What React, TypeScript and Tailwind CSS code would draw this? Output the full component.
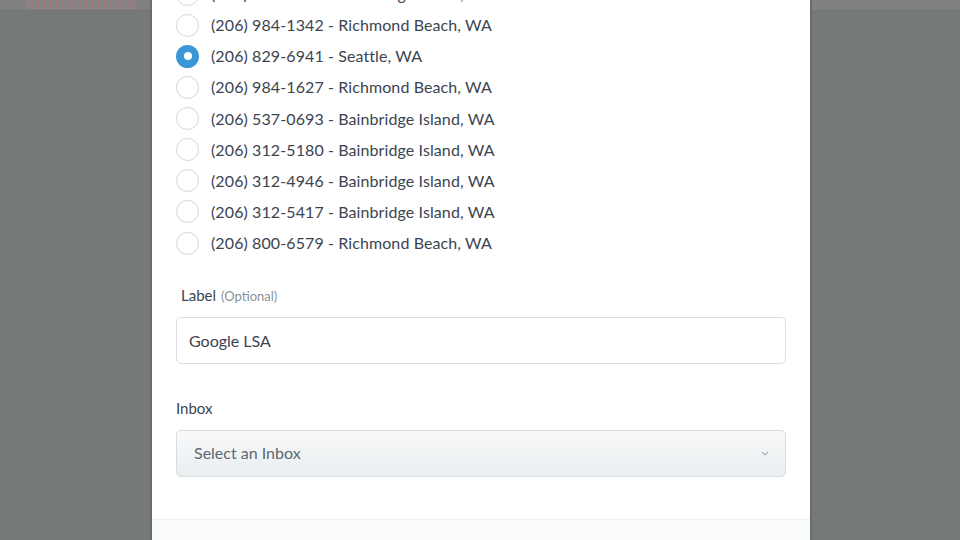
import React from "react";

const rows = [
  { n: "(206) 842-9037 - Bainbridge Island, WA", sel: false },
  { n: "(206) 984-1342 - Richmond Beach, WA", sel: false },
  { n: "(206) 829-6941 - Seattle, WA", sel: true },
  { n: "(206) 984-1627 - Richmond Beach, WA", sel: false },
  { n: "(206) 537-0693 - Bainbridge Island, WA", sel: false },
  { n: "(206) 312-5180 - Bainbridge Island, WA", sel: false },
  { n: "(206) 312-4946 - Bainbridge Island, WA", sel: false },
  { n: "(206) 312-5417 - Bainbridge Island, WA", sel: false },
  { n: "(206) 800-6579 - Richmond Beach, WA", sel: false },
];

export default function App() {
  return (
    <div
      className="relative w-[960px] h-[540px] overflow-hidden bg-[#767979] flex flex-col"
      style={{ fontFamily: "Lato, 'Open Sans', sans-serif" }}
    >
      <div className="h-[11px] bg-[#7f8080] border-b border-[#727474] flex items-start pl-[26px]">
        <div className="w-[110px] h-[9px] bg-[repeating-linear-gradient(90deg,#9a7a7c_0px,#9a7a7c_1px,#858585_1px,#858585_3px)]" />
      </div>
      <div className="flex-1" />

      <div className="absolute left-[150px] top-0 bottom-0 w-[662px] bg-white border-x-2 border-[#6a6d6d] flex flex-col overflow-hidden">
        <div className="flex flex-col mt-[-21.5px] pl-[24px] pr-[24px]">
          {rows.map((r, i) => (
            <div key={i} className="h-[31.125px] flex items-center gap-[12px]">
              {r.sel ? (
                <div className="w-[23px] h-[23px] rounded-full bg-[#3a97d6] flex items-center justify-center">
                  <div className="w-[8px] h-[8px] rounded-full bg-white" />
                </div>
              ) : (
                <div className="w-[23px] h-[23px] rounded-full border border-[#d3d6d8] bg-white" />
              )}
              <span className="text-[16px] text-[#3c4450] tracking-[0.1px]">{r.n}</span>
            </div>
          ))}

          <div className="mt-[25px] flex items-baseline gap-[5px] pl-[5px]">
            <span className="text-[15px] text-[#3c4450]">Label</span>
            <span className="text-[13px] text-[#8a939b]">(Optional)</span>
          </div>
          <div className="mt-[11px] h-[47px] rounded-[5px] border border-[#dcdfe2] flex items-center px-[12px]">
            <span className="text-[16px] text-[#3c4450]">Google LSA</span>
          </div>

          <div className="mt-[33px] text-[15px] text-[#3c4450]">Inbox</div>
          <div className="mt-[10px] h-[47px] rounded-[5px] border border-[#d8dcdf] bg-gradient-to-b from-[#f8f9fa] to-[#eaeef0] flex items-center justify-between pl-[17px] pr-[16px]">
            <span className="text-[16px] text-[#5d6771]">Select an Inbox</span>
            <svg width="8" height="5" viewBox="0 0 8 5" fill="none">
              <path d="M1 1l3 3 3-3" stroke="#a8b0b6" strokeWidth="1.2" />
            </svg>
          </div>
        </div>
        <div className="flex-1" />
        <div className="h-[21px] border-t border-[#eef0f1] bg-[#fafbfb]" />
      </div>
    </div>
  );
}
